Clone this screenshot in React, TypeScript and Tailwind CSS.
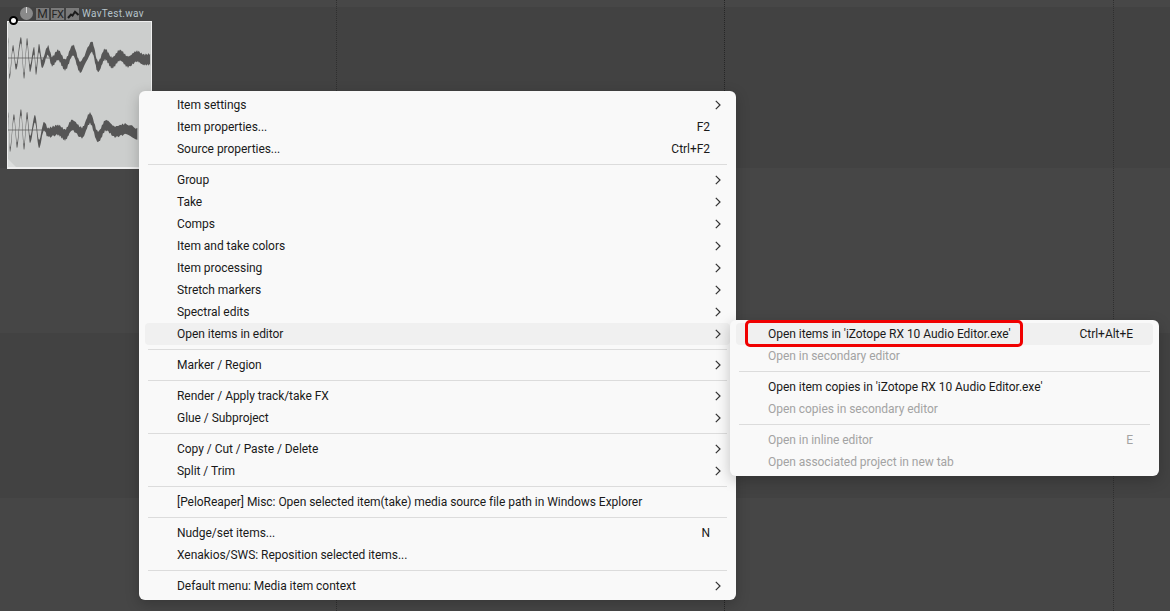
const font = { fontFamily: 'Roboto, sans-serif' };

type Row = { label: string; shortcut?: string; arrow?: boolean; disabled?: boolean; active?: boolean; boxed?: boolean };

const mainMenu: Row[][] = [
  [
    { label: "Item settings", arrow: true },
    { label: "Item properties...", shortcut: "F2" },
    { label: "Source properties...", shortcut: "Ctrl+F2" },
  ],
  [
    { label: "Group", arrow: true },
    { label: "Take", arrow: true },
    { label: "Comps", arrow: true },
    { label: "Item and take colors", arrow: true },
    { label: "Item processing", arrow: true },
    { label: "Stretch markers", arrow: true },
    { label: "Spectral edits", arrow: true },
    { label: "Open items in editor", arrow: true, active: true },
  ],
  [{ label: "Marker / Region", arrow: true }],
  [
    { label: "Render / Apply track/take FX", arrow: true },
    { label: "Glue / Subproject", arrow: true },
  ],
  [
    { label: "Copy / Cut / Paste / Delete", arrow: true },
    { label: "Split / Trim", arrow: true },
  ],
  [{ label: "[PeloReaper] Misc: Open selected item(take) media source file path in Windows Explorer" }],
  [
    { label: "Nudge/set items...", shortcut: "N" },
    { label: "Xenakios/SWS: Reposition selected items..." },
  ],
  [{ label: "Default menu: Media item context", arrow: true }],
];

const subMenu: Row[][] = [
  [
    { label: "Open items in 'iZotope RX 10 Audio Editor.exe'", shortcut: "Ctrl+Alt+E", active: true, boxed: true },
    { label: "Open in secondary editor", disabled: true },
  ],
  [
    { label: "Open item copies in 'iZotope RX 10 Audio Editor.exe'" },
    { label: "Open copies in secondary editor", disabled: true },
  ],
  [
    { label: "Open in inline editor", shortcut: "E", disabled: true },
    { label: "Open associated project in new tab", disabled: true },
  ],
];

// alternating peak / trough extremes, traced in page coordinates
const topLobes: [number, number][] = [
  [8, 37], [9.5, 79], [13, 45], [16, 70], [21, 37], [24, 79], [27, 38], [30, 72], [34, 47], [36, 75], [39, 44], [42, 68],
  [48, 46], [52, 66], [58, 50], [65, 70], [73, 45], [80, 72], [92, 42], [98, 72], [105, 49], [112, 68], [120, 50], [128, 67],
  [137, 51], [144, 65], [151, 54],
];
const bottomLobes: [number, number][] = [
  [8, 112], [10, 152], [14, 114], [17, 148], [21, 109], [24, 150], [27, 112], [30, 143], [35, 115], [39, 148], [44, 122], [48, 137],
  [58, 125], [65, 140], [72, 120], [82, 138], [90, 113], [98, 142], [106, 120], [115, 137], [125, 124], [139, 139],
];

// band half-thickness grows as the early transient dies away
const thickness = (x: number) => 2.3 + 3 * Math.min(1, (x - 8) / 55);

function wavePoints(lobes: [number, number][]) {
  const upper: string[] = [];
  const lower: string[] = [];
  lobes.slice(0, -1).forEach(([x0, y0], i) => {
    const [x1, y1] = lobes[i + 1];
    const c0 = i % 2 === 0 ? y0 + thickness(x0) : y0 - thickness(x0);
    const c1 = i % 2 === 0 ? y1 - thickness(x1) : y1 + thickness(x1);
    for (let s = 0; s < 8; s++) {
      const t = s / 8;
      const x = x0 + (x1 - x0) * t;
      const y = c0 + (c1 - c0) * (0.5 - Math.cos(t * Math.PI) / 2);
      const w = thickness(x);
      const ripple = x > 45 ? 1 : 0.3;
      upper.push(`${x.toFixed(1)},${(y - w + Math.sin(x * 2.7) * ripple).toFixed(1)}`);
      lower.unshift(`${x.toFixed(1)},${(y + w + Math.sin(x * 3.4) * ripple).toFixed(1)}`);
    }
  });
  return [...upper, ...lower].join(" ");
}

function Chevron() {
  return (
    <svg width="6" height="10" viewBox="0 0 6 10" fill="none" className="ml-[5px] text-[#333333]">
      <path d="M0.8 0.8 L5 5 L0.8 9.2" stroke="currentColor" strokeWidth="1.2" />
    </svg>
  );
}

function MenuRow({ row }: { row: Row }) {
  return (
    <div className={`relative mx-[6px] flex h-[22px] items-center rounded-[4px] pl-[32px] ${row.active ? "bg-[#f0f0f0]" : ""} ${row.disabled ? "text-[#a3a3a3]" : "text-[#1a1a1a]"}`}>
      <span className="flex-1 whitespace-nowrap">{row.label}</span>
      {row.shortcut && <span className="whitespace-nowrap">{row.shortcut}</span>}
      <div className="flex w-[20px] shrink-0 items-center">{row.arrow && <Chevron />}</div>
      {row.boxed && (
        <div className="absolute left-[9px] top-[-3px] h-[27px] w-[278px] rounded-[5px] border-[3px] border-[#f00000]" />
      )}
    </div>
  );
}

function Menu({ groups, className }: { groups: Row[][]; className: string }) {
  return (
    <div
      style={font}
      className={`absolute rounded-[6px] bg-[#f9f9f9] py-[3px] text-[12px] leading-none tracking-[-0.04px] shadow-[0_4px_14px_rgba(0,0,0,0.22)] ${className}`}
    >
      {groups.map((group, i) => (
        <div key={i}>
          {i > 0 && <div className="mx-[9px] my-[4px] h-px bg-[#dcdcdc]" />}
          {group.map((row) => (
            <MenuRow key={row.label} row={row} />
          ))}
        </div>
      ))}
    </div>
  );
}

function MediaItem() {
  return (
    <div className="absolute left-[7px] top-[7px] w-[145px]">
      <div className="flex h-[14px] items-start gap-[2px] pl-[13px]">
        <div className="relative mr-[1px] h-[13px] w-[13px] rounded-full bg-[#8a8a8a]">
          <div className="absolute left-[6px] top-0 h-[6px] w-px bg-[#d8d8d8]" />
        </div>
        <div className="mt-px flex h-[12px] w-[13px] items-center justify-center bg-[#7a7a7a] text-[12px] leading-none text-[#262626]" style={font}>M</div>
        <div className="mt-px flex h-[12px] w-[13px] items-center justify-center bg-[#7a7a7a] text-[11px] leading-none tracking-[-0.5px] text-[#262626]" style={font}>FX</div>
        <div className="mt-px flex h-[12px] w-[13px] items-center justify-center bg-[#7a7a7a]">
          <svg width="12" height="9" viewBox="0 0 12 9" fill="none">
            <path d="M1 8 L4 4.5 L5.5 5.5 L8 1.8 L11.5 5" stroke="#1c1c1c" strokeWidth="2" />
          </svg>
        </div>
        <span className="ml-[1px] mt-[1px] whitespace-nowrap text-[10px] leading-[12px] tracking-[0.3px] text-[#b6c2ca]" style={font}>WavTest.wav</span>
      </div>
      <div className="relative h-[148px] border border-b-2 border-[#efefef] bg-[#cccecd]">
        <svg width="143" height="145" viewBox="8 22 143 145" className="block">
          <path d="M8 167 L8 159 L16 167 Z" fill="#dcdedd" />
          <line x1="8" y1="58" x2="60" y2="58" stroke="#555555" strokeWidth="0.7" />
          <line x1="8" y1="130" x2="60" y2="130" stroke="#555555" strokeWidth="0.7" />
          <polygon points={wavePoints(topLobes)} fill="#565656" />
          <polygon points={wavePoints(bottomLobes)} fill="#565656" />
        </svg>
        <div className="absolute left-[1px] top-[-6px] h-[9px] w-[9px] rounded-full border-2 border-black bg-white" />
      </div>
    </div>
  );
}

export default function App() {
  return (
    <div className="relative h-[611px] w-[1170px] overflow-hidden bg-[#464646]">
      {/* track lanes */}
      <div className="h-[7px] bg-[#474747]" />
      <div className="h-[161px] bg-[#424242]" />
      <div className="h-[165px] bg-[#464646]" />
      <div className="h-[165px] bg-[#424242]" />
      <div className="h-[113px] bg-[#464646]" />

      {/* grid lines */}
      <div className="absolute inset-y-0 left-[336px] border-l border-dotted border-[#2f2f2f]" />
      <div className="absolute inset-y-0 left-[724px] border-l border-dotted border-[#262626]" />
      <div className="absolute inset-y-0 left-[1113px] border-l border-dotted border-[#2f2f2f]" />

      <MediaItem />
      <Menu groups={mainMenu} className="left-[139px] top-[91px] w-[597px]" />
      <Menu groups={subMenu} className="left-[730px] top-[320px] w-[429px]" />
    </div>
  );
}
